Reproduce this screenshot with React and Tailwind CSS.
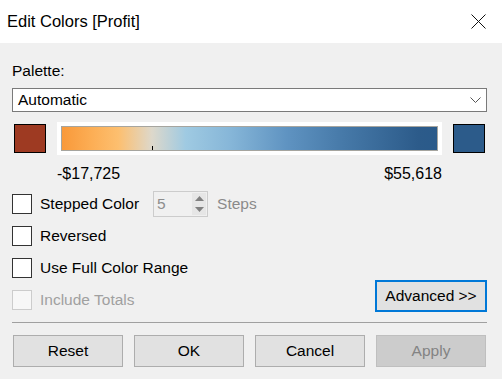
import React from "react"

const font = { fontFamily: '"Liberation Sans", Arial, sans-serif' }

const Check = ({ label, disabled }) => (
    <div className="flex items-center h-[32px]">
        <span className={"w-[20px] h-[20px] border " + (disabled ? "border-[#cccccc] bg-[#f7f7f7]" : "border-[#333333] bg-white")} />
        <span className={"ml-[8px] text-[15.5px] " + (disabled ? "text-[#a0a0a0]" : "text-black")}>{label}</span>
    </div>
)

const Btn = ({ children, disabled }) => (
    <button className={"w-[110px] h-[32px] border text-[15.5px] " + (disabled ? "bg-[#cccccc] border-[#bfbfbf] text-[#838383]" : "bg-[#e1e1e1] border-[#adadad] text-black")}>
        {children}
    </button>
)

export default function App() {
    return (
        <div className="w-[502px] h-[379px] bg-[#f0f0f0] overflow-hidden" style={font}>
            <div className="h-[43px] bg-white flex items-center justify-between pl-[7px] pr-[16px]">
                <span className="text-[16.5px] text-black">Edit Colors [Profit]</span>
                <svg width="15" height="15" viewBox="0 0 15 15">
                    <path d="M0.5 0.5 L14.5 14.5 M14.5 0.5 L0.5 14.5" stroke="#111" strokeWidth="1" />
                </svg>
            </div>

            <div className="pl-3 pr-[15px] flex flex-col">
                <div className="mt-[18px] h-[20px] leading-[20px] text-[15.5px] text-black">Palette:</div>

                <div className="mt-[7px] h-[24px] bg-white border border-[#7a7a7a] flex items-center justify-between pl-[5px] pr-[5px]">
                    <span className="text-[15.5px] text-black">Automatic</span>
                    <svg width="11" height="7" viewBox="0 0 11 7">
                        <path d="M0.5 0.5 L5.5 5.5 L10.5 0.5" fill="none" stroke="#555" strokeWidth="1" />
                    </svg>
                </div>

                <div className="mt-[10px] flex items-center">
                    <div className="ml-[2px] w-[32px] h-[29px] bg-[#9e3a22] border border-black" />
                    <div className="ml-[11px] w-[385px] h-[33px] bg-white p-[4px]">
                        <div className="relative h-full border border-[#a6a59f] bg-[linear-gradient(to_right,#f9993a_0%,#fcae55_8%,#fdbf6f_15%,#ddd8cb_24%,#9fcae2_33%,#86b6d8_45%,#5f93c1_60%,#4679a8_75%,#2c5b8a_95%,#2a5a8a_100%)]">
                            <span className="absolute left-[90px] bottom-0 w-px h-[4px] bg-black" />
                        </div>
                    </div>
                    <div className="ml-[11px] w-[32px] h-[29px] bg-[#2c5b8a] border border-black" />
                </div>

                <div className="ml-[45px] w-[385px] mt-[9px] flex justify-between text-[16px] text-black h-[20px] leading-[20px]">
                    <span>-$17,725</span>
                    <span>$55,618</span>
                </div>

                <div className="mt-[4px] flex justify-between items-end">
                    <div className="flex flex-col">
                        <div className="flex items-center h-[32px]">
                            <span className="w-[20px] h-[20px] border border-[#333333] bg-white" />
                            <span className="ml-[8px] text-[15.5px] text-black">Stepped Color</span>
                            <div className="ml-[14px] w-[55px] h-[26px] border border-[#cccccc] flex items-center justify-between pl-[3px] pr-[1px]">
                                <span className="text-[15.5px] text-[#8d8d8d]">5</span>
                                <div className="flex flex-col gap-[1px] w-[14px] h-[22px] bg-[#e6e6e6]">
                                    <div className="flex-1 flex items-center justify-center">
                                        <svg width="9" height="5" viewBox="0 0 9 5"><path d="M0 5 L4.5 0 L9 5 Z" fill="#808080" /></svg>
                                    </div>
                                    <div className="flex-1 flex items-center justify-center">
                                        <svg width="9" height="5" viewBox="0 0 9 5"><path d="M0 0 L4.5 5 L9 0 Z" fill="#808080" /></svg>
                                    </div>
                                </div>
                            </div>
                            <span className="ml-[9px] text-[15.5px] text-[#8a8a8a]">Steps</span>
                        </div>
                        <Check label="Reversed" />
                        <Check label="Use Full Color Range" />
                        <Check label="Include Totals" disabled />
                    </div>
                    <button className="mb-[4px] w-[112px] h-[32px] bg-[#e1e1e1] border-2 border-[#0078d7] text-[15.5px] text-black">
                        Advanced &gt;&gt;
                    </button>
                </div>

                <div className="mt-[6px] h-px bg-[#a0a0a0]" />

                <div className="mt-[12px] px-[1px] flex justify-between">
                    <Btn>Reset</Btn>
                    <Btn>OK</Btn>
                    <Btn>Cancel</Btn>
                    <Btn disabled>Apply</Btn>
                </div>
            </div>
        </div>
    )
}
